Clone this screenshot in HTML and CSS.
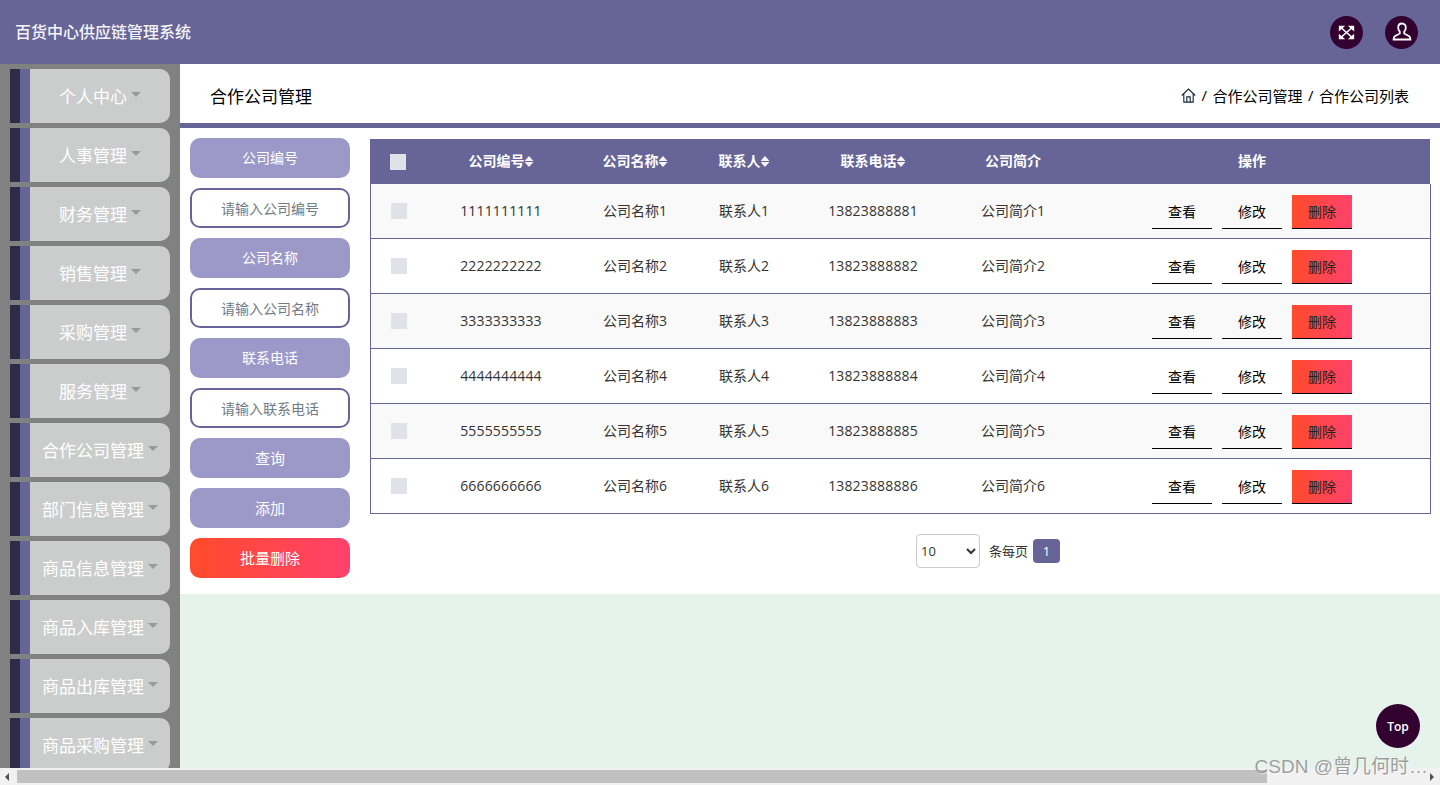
FILE: index.html
```html
<!DOCTYPE html>
<html lang="zh">
<head>
<meta charset="utf-8">
<title>百货中心供应链管理系统</title>
<link rel="stylesheet" href="styles.css">
</head>
<body>
<div class="page">
  <header class="topbar">
    <div class="brand">百货中心供应链管理系统</div>
    <div class="top-actions">
      <span class="round-btn"><svg viewBox="0 0 20 20" width="17" height="15" preserveAspectRatio="none" fill="#fff" stroke="#fff" stroke-width="1.800"><path stroke="none" d="M1 1h7.500L1 8.500zM19 1v7.500L11.500 1zM19 19h-7.500L19 11.500zM1 19v-7.500L8.500 19z"/><path fill="none" d="M4 4l12 12M16 4L4 16"/></svg></span>
      <span class="round-btn"><svg viewBox="0 0 20 20" width="20" height="20" fill="none" stroke="#fff" stroke-width="1.800"><path d="M10 1.500c-2.400 0-3.800 1.800-3.800 4.200 0 1.700.7 3.100 1.600 4v1.800l-5 2.800c-.8.500-1.200 1-1.200 3.200h16.800c0-2.200-.4-2.700-1.200-3.200l-5-2.800V9.700c.9-.9 1.600-2.300 1.600-4 0-2.400-1.400-4.200-3.800-4.200z"/></svg></span>
    </div>
  </header>
  <div class="middle">
    <nav class="sidebar">
      <a class="nav-item"><span class="nav-label">个人中心</span><i class="caret"></i></a>
      <a class="nav-item"><span class="nav-label">人事管理</span><i class="caret"></i></a>
      <a class="nav-item"><span class="nav-label">财务管理</span><i class="caret"></i></a>
      <a class="nav-item"><span class="nav-label">销售管理</span><i class="caret"></i></a>
      <a class="nav-item"><span class="nav-label">采购管理</span><i class="caret"></i></a>
      <a class="nav-item"><span class="nav-label">服务管理</span><i class="caret"></i></a>
      <a class="nav-item"><span class="nav-label">合作公司管理</span><i class="caret"></i></a>
      <a class="nav-item"><span class="nav-label">部门信息管理</span><i class="caret"></i></a>
      <a class="nav-item"><span class="nav-label">商品信息管理</span><i class="caret"></i></a>
      <a class="nav-item"><span class="nav-label">商品入库管理</span><i class="caret"></i></a>
      <a class="nav-item"><span class="nav-label">商品出库管理</span><i class="caret"></i></a>
      <a class="nav-item"><span class="nav-label">商品采购管理</span><i class="caret"></i></a>
    </nav>
    <main class="main">
      <div class="crumbbar">
        <h1 class="page-title">合作公司管理</h1>
        <div class="crumbs">
          <svg class="home" viewBox="0 0 16 16" width="15" height="15" fill="none" stroke="#14283c" stroke-width="1.200"><path d="M.8 8L8 1.200 15.200 8M3 6.500v8.500h10V6.500M6.200 15V9.500h3.600V15"/></svg>
          <span>/</span><span>合作公司管理</span><span>/</span><span>合作公司列表</span>
        </div>
      </div>
      <section class="panel">
        <form class="filters">
          <div class="f-label">公司编号</div>
          <input class="f-input" placeholder="请输入公司编号">
          <div class="f-label">公司名称</div>
          <input class="f-input" placeholder="请输入公司名称">
          <div class="f-label">联系电话</div>
          <input class="f-input" placeholder="请输入联系电话">
          <div class="f-label f-btn">查询</div>
          <div class="f-label f-btn">添加</div>
          <div class="f-label f-btn f-danger">批量删除</div>
        </form>
        <div class="content">
          <table class="grid">
            <colgroup>
              <col class="c-check"><col class="c-code"><col class="c-name"><col class="c-contact"><col class="c-phone"><col class="c-brief"><col class="c-ops">
            </colgroup>
            <thead>
              <tr>
                <th><i class="check"></i></th>
                <th>公司编号<i class="sort"></i></th>
                <th>公司名称<i class="sort"></i></th>
                <th>联系人<i class="sort"></i></th>
                <th>联系电话<i class="sort"></i></th>
                <th>公司简介</th>
                <th>操作</th>
              </tr>
            </thead>
            <tbody>
              <tr><td><i class="check"></i></td><td class="num">1111111111</td><td>公司名称1</td><td>联系人1</td><td class="num">13823888881</td><td>公司简介1</td><td class="ops"><span class="op">查看</span><span class="op">修改</span><span class="op op-del">删除</span></td></tr>
              <tr><td><i class="check"></i></td><td class="num">2222222222</td><td>公司名称2</td><td>联系人2</td><td class="num">13823888882</td><td>公司简介2</td><td class="ops"><span class="op">查看</span><span class="op">修改</span><span class="op op-del">删除</span></td></tr>
              <tr><td><i class="check"></i></td><td class="num">3333333333</td><td>公司名称3</td><td>联系人3</td><td class="num">13823888883</td><td>公司简介3</td><td class="ops"><span class="op">查看</span><span class="op">修改</span><span class="op op-del">删除</span></td></tr>
              <tr><td><i class="check"></i></td><td class="num">4444444444</td><td>公司名称4</td><td>联系人4</td><td class="num">13823888884</td><td>公司简介4</td><td class="ops"><span class="op">查看</span><span class="op">修改</span><span class="op op-del">删除</span></td></tr>
              <tr><td><i class="check"></i></td><td class="num">5555555555</td><td>公司名称5</td><td>联系人5</td><td class="num">13823888885</td><td>公司简介5</td><td class="ops"><span class="op">查看</span><span class="op">修改</span><span class="op op-del">删除</span></td></tr>
              <tr><td><i class="check"></i></td><td class="num">6666666666</td><td>公司名称6</td><td>联系人6</td><td class="num">13823888886</td><td>公司简介6</td><td class="ops"><span class="op">查看</span><span class="op">修改</span><span class="op op-del">删除</span></td></tr>
            </tbody>
          </table>
          <div class="pager">
            <select class="page-size"><option>10</option><option>20</option></select>
            <span class="per">条每页</span>
            <span class="page-num">1</span>
          </div>
        </div>
      </section>
      <div class="rest"></div>
    </main>
  </div>
  <div class="hscroll">
    <span class="arrow arrow-l"></span>
    <span class="thumb"></span>
    <span class="arrow arrow-r"></span>
  </div>
  <div class="to-top">Top</div>
  <div class="watermark">CSDN @曾几何时…</div>
</div>
</body>
</html>
```
FILE: styles.css
```css
* { box-sizing: border-box; }
html, body { margin: 0; height: 100%; overflow: hidden; }
body { font-family: "Open Sans", "Noto Sans CJK SC", sans-serif; font-size: 14px; color: #333; background: #fff; }
.page { position: relative; height: 785px; display: flex; flex-direction: column; overflow: hidden; }

.topbar { flex: 0 0 64px; background: #676597; display: flex; align-items: center; justify-content: space-between; padding: 0 22px 0 15px; }
.brand { color: #f4f4f8; font-size: 16px; font-weight: 500; padding-bottom: 2px; }
.top-actions { display: flex; gap: 22px; }
.round-btn { width: 33px; height: 33px; border-radius: 50%; background: #32012f; display: flex; align-items: center; justify-content: center; }

.middle { flex: 1; min-height: 0; display: flex; }
.sidebar { flex: 0 0 180px; background: #808180; padding: 5px 10px 0; display: flex; flex-direction: column; gap: 5px; overflow: hidden; }
.nav-item { flex: 0 0 54px; display: flex; align-items: center; justify-content: center; gap: 4px; padding-left: 10px; border-left: 10px solid #2e2d48; background: linear-gradient(90deg, #676597 10px, #cbcdcc 10px); border-radius: 0 10px 10px 0; color: #fff; font-size: 17px; }
.nav-label { padding-bottom: 1px; }
.caret { width: 0; height: 0; border-left: 5px solid transparent; border-right: 5px solid transparent; border-top: 5px solid #9a9a9a; margin-bottom: 3px; }

.main { flex: 1; min-width: 0; display: flex; flex-direction: column; }
.crumbbar { flex: 0 0 64px; border-bottom: 5px solid #676597; display: flex; align-items: center; justify-content: space-between; padding: 0 31px 0 30px; color: #000; }
.page-title { margin: 0; font-size: 17px; font-weight: 400; padding-top: 3px; }
.crumbs { display: flex; align-items: center; gap: 5.500px; font-size: 15px; padding-top: 3px; }

.panel { flex: 0 0 466px; display: flex; padding: 10px 9px 0 10px; gap: 20px; }
.filters { flex: 0 0 160px; display: flex; flex-direction: column; gap: 10px; }
.f-label { height: 40px; padding-bottom: 3px; border-radius: 10px; background: #9c99c9; color: #fff; font-size: 14px; display: flex; align-items: center; justify-content: center; }
.f-btn { font-size: 15px; padding-bottom: 2px; }
.f-input { height: 40px; width: 100%; border: 2px solid #676597; border-radius: 10px; background: #fff; text-align: center; font: 14px "Open Sans", "Noto Sans CJK SC", sans-serif; color: #333; outline: none; }
.f-input::placeholder { color: #727b85; opacity: 1; }
.f-danger { background: linear-gradient(90deg, #ff4b2b, #ff416c); }

.content { flex: 1; min-width: 0; padding-top: 1px; }
.grid { table-layout: fixed; width: 1061px; border-collapse: separate; border-spacing: 0; }
.c-check { width: 56px; } .c-code { width: 150px; } .c-name { width: 118px; } .c-contact { width: 100px; }
.c-phone { width: 158px; } .c-brief { width: 122px; } .c-ops { width: 357px; }
.grid th { height: 45px; padding: 0 0 3px; background: #676597; color: #fff; font-size: 14px; font-weight: 700; text-align: center; }
.grid th:last-child { border-right: 1px solid #fff; }
.grid td { height: 55px; padding: 0 0 3px; text-align: center; font-size: 14px; color: #333; border-bottom: 1px solid #676597; }
.grid td.num { letter-spacing: .15px; padding-bottom: 2px; }
.grid td:first-child { border-left: 1px solid #676597; }
.grid td:last-child { border-right: 1px solid #676597; }
.grid tbody tr:nth-child(odd) td { background: #f9f9f9; }
.check { display: inline-block; width: 16px; height: 16px; background: #dfe2e6; vertical-align: middle; }
.sort { display: inline-block; position: relative; width: 9px; height: 11px; vertical-align: -1px; }
.sort::before, .sort::after { content: ""; position: absolute; left: 0; width: 9px; height: 5px; background: #f4f4f8; }
.sort::before { top: 0; clip-path: polygon(50% 0, 100% 100%, 0 100%); }
.sort::after { bottom: 0; clip-path: polygon(0 0, 100% 0, 50% 100%); }
.grid td.ops { font-size: 0; padding: 11px 0 0; vertical-align: top; }
.op { display: inline-flex; align-items: center; justify-content: center; vertical-align: top; width: 60px; height: 34px; margin: 0 5px; padding-bottom: 2px; border-bottom: 1px solid #000; color: #000; font-size: 14px; }
.op-del { background: linear-gradient(90deg, #ff4b2b, #ff416c); color: #222; }

.pager { display: flex; align-items: center; justify-content: center; margin: 20px 0 0; padding-left: 175px; font-size: 13px; color: #333; }
.page-size { width: 64px; height: 34px; border: 1px solid #ccc; border-radius: 4px; background: #fff; padding: 0; font: 13px "Open Sans", sans-serif; color: #333; }
.per { margin-left: 9px; padding-bottom: 1px; }
.page-num { margin-left: 5px; width: 27px; height: 24px; border-radius: 4px; background: #676597; color: #fff; display: flex; align-items: center; justify-content: center; font-size: 13px; }

.rest { flex: 1; background: #e6f2ec; }

.hscroll { flex: 0 0 17px; background: #f1f1f1; display: flex; align-items: center; }
.arrow { flex: 0 0 17px; height: 17px; display: flex; align-items: center; justify-content: center; }
.arrow::before { content: ""; width: 0; height: 0; border-top: 4px solid transparent; border-bottom: 4px solid transparent; }
.arrow-l { padding-right: 3px; }
.arrow-l::before { border-right: 4px solid #505050; }
.arrow-r::before { border-left: 4px solid #505050; }
.thumb { flex: 0 0 1250px; height: 13px; background: #c1c1c1; }
.hscroll .arrow-r { margin-left: auto; }

.to-top { position: absolute; left: 1376px; top: 704px; width: 44px; height: 44px; border-radius: 50%; background: #32012f; color: #fff; font-size: 12px; font-weight: 600; display: flex; align-items: center; justify-content: center; }
.watermark { position: absolute; right: 12px; top: 751px; color: rgba(130,130,130,.75); font: 19px "Liberation Sans", "Noto Sans CJK SC", sans-serif; text-shadow: 1px 1px 1px rgba(255,255,255,.6); white-space: nowrap; }
```
